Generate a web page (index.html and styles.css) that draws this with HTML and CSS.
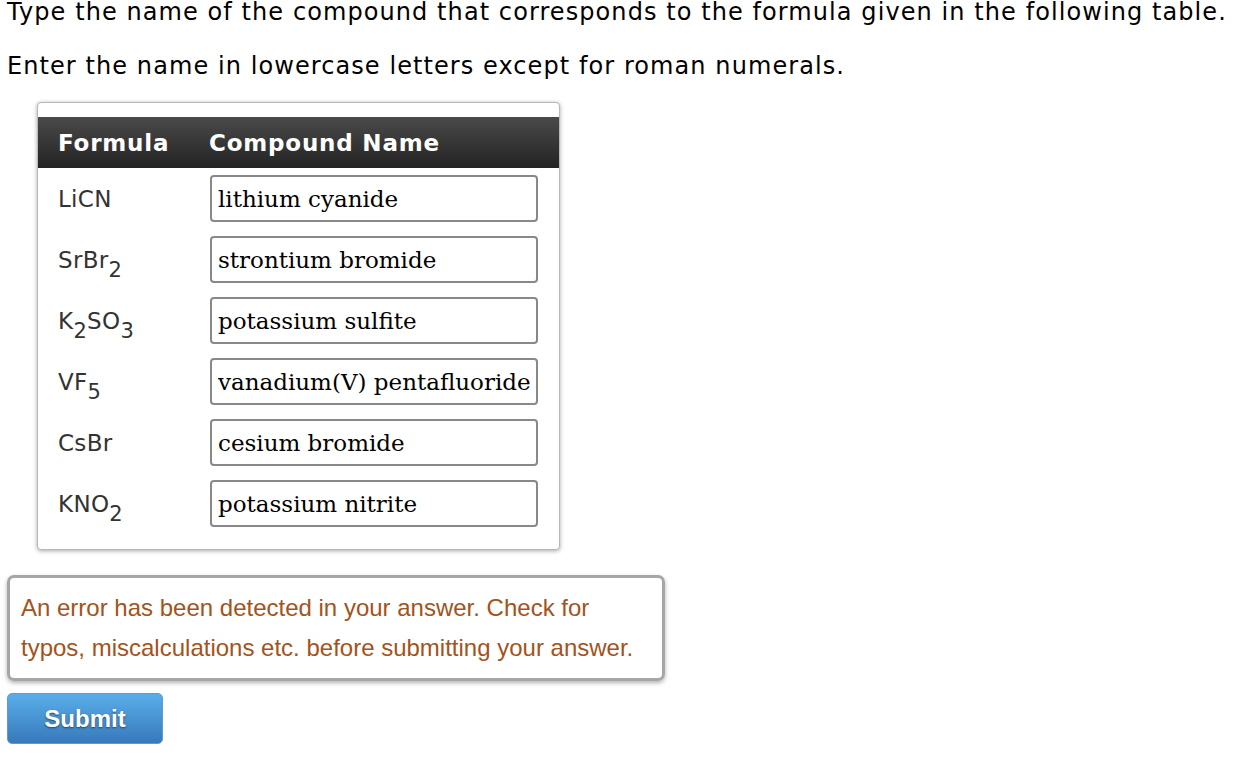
FILE: index.html
```html
<!DOCTYPE html>
<html lang="en">

<head>
  <meta charset="UTF-8" />
  <meta name="viewport" content="width=device-width, initial-scale=1.0" />
  <title>Compound names</title>
  <link rel="stylesheet" href="styles.css">
</head>

<body>
  <p class="prompt">Type the name of the compound that corresponds to the formula given in the following table.</p>
  <p class="prompt">Enter the name in lowercase letters except for roman numerals.</p>

  <div class="answer-box">
    <table class="compound-table">
      <thead>
        <tr>
          <th class="col-formula">Formula</th>
          <th>Compound Name</th>
        </tr>
      </thead>
      <tbody>
        <tr>
          <td class="formula">LiCN</td>
          <td><input class="name-input" type="text" value="lithium cyanide" /></td>
        </tr>
        <tr>
          <td class="formula">SrBr<sub>2</sub></td>
          <td><input class="name-input" type="text" value="strontium bromide" /></td>
        </tr>
        <tr>
          <td class="formula">K<sub>2</sub>SO<sub>3</sub></td>
          <td><input class="name-input" type="text" value="potassium sulfite" /></td>
        </tr>
        <tr>
          <td class="formula">VF<sub>5</sub></td>
          <td><input class="name-input" type="text" value="vanadium(V) pentafluoride" /></td>
        </tr>
        <tr>
          <td class="formula">CsBr</td>
          <td><input class="name-input" type="text" value="cesium bromide" /></td>
        </tr>
        <tr>
          <td class="formula">KNO<sub>2</sub></td>
          <td><input class="name-input" type="text" value="potassium nitrite" /></td>
        </tr>
      </tbody>
    </table>
  </div>

  <div class="error-box">
    An error has been detected in your answer. Check for typos, miscalculations etc. before submitting your answer.
  </div>

  <button class="submit">Submit</button>
</body>

</html>
```

FILE: styles.css
```css
* {
  box-sizing: border-box;
}

body {
  margin: 0;
  padding: 0 7px;
  font-family: "DejaVu Sans", Verdana, sans-serif;
  color: #000;
  background: #fff;
}

.prompt {
  margin: 0;
  font-size: 24px;
  line-height: 30px;
  letter-spacing: 1.08px;
}

.prompt:first-child {
  margin-top: -3px;
}

.prompt + .prompt {
  margin-top: 24px;
}

.answer-box {
  width: 523px;
  margin: 21px 0 0 30px;
  padding: 14px 0 15px 0;
  border: 1px solid #b8b8b8;
  border-radius: 4px;
  box-shadow: 0 1px 4px rgba(0, 0, 0, 0.35);
  background: #fff;
}

.compound-table {
  width: 100%;
  border-collapse: collapse;
}

.compound-table th {
  height: 51px;
  padding: 0 0 0 20px;
  text-align: left;
  font-size: 23px;
  font-weight: bold;
  letter-spacing: 0.8px;
  color: #fff;
  background: linear-gradient(#4a4a4a, #232323);
}

.compound-table th.col-formula {
  width: 151px;
}

.compound-table td {
  padding: 7px 0 7px 20px;
  height: 61px;
}

.compound-table td:last-child {
  padding-left: 21px;
}

.formula {
  font-size: 23px;
  letter-spacing: 0.3px;
  color: #333;
  vertical-align: middle;
}

.formula sub {
  font-size: 21px;
  line-height: 0;
  vertical-align: -9px;
}

.name-input {
  display: block;
  width: 328px;
  height: 47px;
  padding: 0 6px;
  border: 2px solid #888;
  border-radius: 4px;
  font-family: Georgia, "DejaVu Serif", serif;
  font-size: 23px;
  color: #000;
  background: #fff;
}

.error-box {
  width: 658px;
  margin-top: 25px;
  padding: 10px 11px;
  border: 3px solid #a6a6a6;
  border-radius: 7px;
  box-shadow: 0 2px 4px rgba(0, 0, 0, 0.3);
  font-family: "Liberation Sans", Arial, sans-serif;
  font-size: 24px;
  line-height: 40px;
  color: #a3531b;
}

.submit {
  display: block;
  width: 156px;
  height: 51px;
  margin-top: 12px;
  border: 1px solid #5c9bd3;
  border-radius: 5px;
  background: linear-gradient(#59aeea, #3879ba);
  font-family: "Liberation Sans", Arial, sans-serif;
  font-size: 24px;
  font-weight: bold;
  color: #fff;
  text-shadow: 0 1px 2px rgba(0, 0, 0, 0.5);
  cursor: pointer;
}
```
